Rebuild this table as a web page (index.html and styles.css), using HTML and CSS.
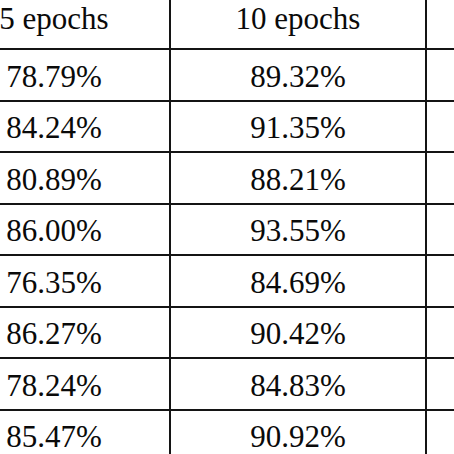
FILE: index.html
```html
<!DOCTYPE html>
<html>
<head>
<meta charset="utf-8">
<link rel="stylesheet" href="styles.css">
</head>
<body>
<table class="results">
  <colgroup>
    <col class="c1"><col class="c2"><col class="c3">
  </colgroup>
  <thead>
    <tr><th>5 epochs</th><th>10 epochs</th><th></th></tr>
  </thead>
  <tbody>
    <tr><td>78.79%</td><td>89.32%</td><td></td></tr>
    <tr><td>84.24%</td><td>91.35%</td><td></td></tr>
    <tr><td>80.89%</td><td>88.21%</td><td></td></tr>
    <tr><td>86.00%</td><td>93.55%</td><td></td></tr>
    <tr><td>76.35%</td><td>84.69%</td><td></td></tr>
    <tr><td>86.27%</td><td>90.42%</td><td></td></tr>
    <tr><td>78.24%</td><td>84.83%</td><td></td></tr>
    <tr><td>85.47%</td><td>90.92%</td><td></td></tr>
  </tbody>
</table>
</body>
</html>
```
FILE: styles.css
```css
html, body {
  margin: 0;
  padding: 0;
  background: #fff;
  overflow: hidden;
}
body {
  width: 454px;
  height: 454px;
}
.results {
  border-collapse: collapse;
  table-layout: fixed;
  width: 688px;
  margin-left: -63px;
  margin-top: -3.5px;
  font-family: "Liberation Serif", "Times New Roman", serif;
  font-size: 31px;
  color: #0a0a0a;
}
.c1 { width: 232px; }
.c2 { width: 256px; }
.c3 { width: 200px; }
.results th,
.results td {
  border: 2px solid #141414;
  text-align: center;
  font-weight: normal;
  line-height: 34px;
  vertical-align: middle;
  white-space: nowrap;
}
.results th {
  height: 41.5px;
  padding: 0 0 8px 0;
}
.results td {
  height: 45.5px;
  padding: 4px 0 0 0;
}
```
